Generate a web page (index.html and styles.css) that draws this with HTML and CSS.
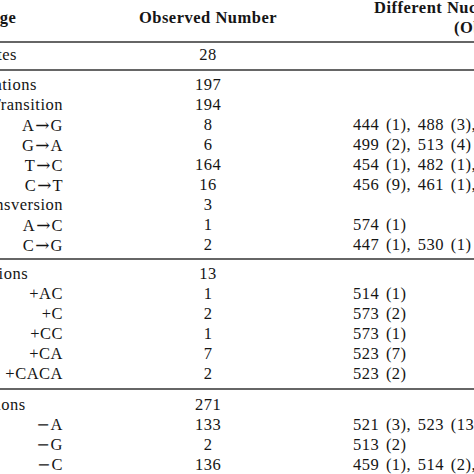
FILE: index.html
```html
<!DOCTYPE html>
<html lang="en">
<head>
<meta charset="utf-8">
<title>Mutation table</title>
<link rel="stylesheet" href="styles.css">
</head>
<body>
<div class="table">
  <div class="row head">
    <div class="c1">Type of Change</div>
    <div class="c2">Observed Number</div>
    <div class="c3 hc3"><span class="h3a">Different Nucleotide Positions</span><span class="h3b">(Observed Number)</span></div>
  </div>

  <div class="group sites">
    <div class="row"><div class="c1 l1">All sites</div><div class="c2">28</div><div class="c3"></div></div>
  </div>

  <div class="group">
    <div class="row"><div class="c1 l1">Alterations</div><div class="c2">197</div><div class="c3"></div></div>
    <div class="row"><div class="c1 l2">Transition</div><div class="c2">194</div><div class="c3"></div></div>
    <div class="row"><div class="c1 l3">A<span class="arr">→</span>G</div><div class="c2">8</div><div class="c3">444 (1), 488 (3), 508 (4)</div></div>
    <div class="row"><div class="c1 l3">G<span class="arr">→</span>A</div><div class="c2">6</div><div class="c3">499 (2), 513 (4)</div></div>
    <div class="row"><div class="c1 l3">T<span class="arr">→</span>C</div><div class="c2">164</div><div class="c3">454 (1), 482 (1), 489 (162)</div></div>
    <div class="row"><div class="c1 l3">C<span class="arr">→</span>T</div><div class="c2">16</div><div class="c3">456 (9), 461 (1), 489 (6)</div></div>
    <div class="row"><div class="c1 l2">Transversion</div><div class="c2">3</div><div class="c3"></div></div>
    <div class="row"><div class="c1 l3">A<span class="arr">→</span>C</div><div class="c2">1</div><div class="c3">574 (1)</div></div>
    <div class="row"><div class="c1 l3">C<span class="arr">→</span>G</div><div class="c2">2</div><div class="c3">447 (1), 530 (1)</div></div>
  </div>

  <div class="group ins">
    <div class="row"><div class="c1 l1">Insertions</div><div class="c2">13</div><div class="c3"></div></div>
    <div class="row"><div class="c1 l3">+AC</div><div class="c2">1</div><div class="c3">514 (1)</div></div>
    <div class="row"><div class="c1 l3">+C</div><div class="c2">2</div><div class="c3">573 (2)</div></div>
    <div class="row"><div class="c1 l3">+CC</div><div class="c2">1</div><div class="c3">573 (1)</div></div>
    <div class="row"><div class="c1 l3">+CA</div><div class="c2">7</div><div class="c3">523 (7)</div></div>
    <div class="row"><div class="c1 l3">+CACA</div><div class="c2">2</div><div class="c3">523 (2)</div></div>
  </div>

  <div class="group del">
    <div class="row"><div class="c1 l1">Deletions</div><div class="c2">271</div><div class="c3"></div></div>
    <div class="row"><div class="c1 l3"><span class="minus">−</span>A</div><div class="c2">133</div><div class="c3">521 (3), 523 (130)</div></div>
    <div class="row"><div class="c1 l3"><span class="minus">−</span>G</div><div class="c2">2</div><div class="c3">513 (2)</div></div>
    <div class="row"><div class="c1 l3"><span class="minus">−</span>C</div><div class="c2">136</div><div class="c3">459 (1), 514 (2), 523 (133)</div></div>
  </div>
</div>
</body>
</html>
```

FILE: styles.css
```css
* { box-sizing: border-box; }

html, body {
  margin: 0;
  padding: 0;
  background: #ffffff;
  overflow: hidden;
}

body {
  font-family: "Liberation Serif", "Times New Roman", serif;
  font-size: 16.5px;
  color: #151515;
  letter-spacing: 0.5px;
}

.table {
  width: 901px;
  margin-left: -200px;
}

.row {
  display: grid;
  grid-template-columns: 315px 186px 400px;
  height: 20px;
  line-height: 20px;
  white-space: nowrap;
}

.head {
  height: auto;
  margin-top: -2px;
  padding-bottom: 3px;
  border-bottom: 2px solid #666666;
  font-weight: bold;
  align-items: center;
}

.head .c1 { text-align: center; }

.c2 { text-align: center; }

.c3 {
  padding-left: 52px;
  word-spacing: 2px;
}

.hc3 {
  display: flex;
  flex-direction: column;
  padding-left: 0;
  word-spacing: 0;
}

.h3a { padding-left: 73px; }
.h3b { padding-left: 153px; }

.l1 { padding-left: 158px; }

.l2,
.l3 {
  text-align: right;
  padding-right: 52px;
}

.arr {
  font-family: "DejaVu Serif", serif;
  font-size: 17px;
  letter-spacing: 0;
  margin: 0 1px;
}

.minus {
  font-family: "DejaVu Serif", serif;
  font-size: 16px;
  letter-spacing: 0;
  margin-right: 1px;
}

.group {
  border-bottom: 2px solid #666666;
  padding: 4px 0 3px;
}

.group.sites { padding: 2px 0 4px; }
.group.ins { padding: 4px 0 4px; }
.group.del { padding: 5px 0 0; border-bottom: none; }
```
